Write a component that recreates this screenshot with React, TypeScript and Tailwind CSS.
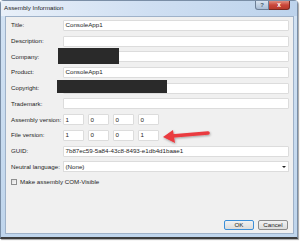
import React from "react";

const font = { fontFamily: '"Liberation Sans", Arial, sans-serif' };

function Field({ label, children }: { label: string; children?: React.ReactNode }) {
  return (
    <div className="flex items-center h-[11px]">
      <div className="w-[52px] shrink-0 text-[6.2px] text-[#1e1e1e] leading-none whitespace-nowrap">{label}</div>
      {children}
    </div>
  );
}

function TextBox({ value, className = "" }: { value?: string; className?: string }) {
  return (
    <div className={`h-[11px] bg-white border border-[#dcdcdc] rounded-[1px] flex items-center px-[1.5px] text-[6.2px] text-[#1e1e1e] leading-none whitespace-nowrap overflow-hidden ${className}`}>
      {value}
    </div>
  );
}

function Versions({ vals }: { vals: string[] }) {
  return (
    <div className="flex gap-[4px]">
      {vals.map((v, i) => (
        <TextBox key={i} value={v} className="w-[21px]" />
      ))}
    </div>
  );
}

export default function App() {
  return (
    <div className="w-[300px] h-[241px] bg-white relative overflow-hidden" style={font}>
      <div className="w-[298px] h-[239px] rounded-t-[4px] border border-[#7a8ea6] border-b-[#3c3c3c] border-b-2 bg-gradient-to-b from-[#d3e3f4] to-[#bfd5ec] flex flex-col shadow-[1px_1px_1px_rgba(0,0,0,0.35)]">
        {/* title bar */}
        <div className="h-[15px] shrink-0 flex items-start bg-gradient-to-r from-[#e9f0f9] via-[#cfdff2] to-[#bdd3ec]">
          <div className="pl-[3px] pt-[4px] text-[6.2px] text-[#222] leading-none whitespace-nowrap">Assembly Information</div>
          <div className="flex-1" />
          <div className="flex mr-[7px]">
            <div className="w-[14px] h-[9px] border border-[#6d7f96] border-t-0 rounded-bl-[3px] bg-gradient-to-b from-[#d8e4f1] to-[#a9bdd5] flex items-center justify-center text-[6px] text-[#4a5a6e] leading-none font-bold">?</div>
            <div className="w-[21px] h-[9px] border border-[#7a2a22] border-t-0 border-l-0 rounded-br-[3px] bg-gradient-to-b from-[#e08d80] via-[#c9463a] to-[#b83a2b] flex items-center justify-center text-[6.5px] text-white leading-none font-bold">x</div>
          </div>
        </div>
        {/* client area */}
        <div className="relative ml-[4px] mr-[3px] mb-[3px] flex-1 bg-[#f0f0f0] border border-[#9fb2c9] flex flex-col pl-[5px] pr-[4px] pt-[3px] pb-[3px]">
          <div className="flex flex-col gap-[4.7px]">
            <Field label="Title:"><TextBox value="ConsoleApp1" className="flex-1" /></Field>
            <Field label="Description:"><TextBox className="flex-1" /></Field>
            <Field label="Company:"><TextBox className="flex-1" /></Field>
            <Field label="Product:"><TextBox value="ConsoleApp1" className="flex-1" /></Field>
            <Field label="Copyright:"><TextBox className="flex-1" /></Field>
            <Field label="Trademark:"><TextBox className="flex-1" /></Field>
            <Field label="Assembly version:"><Versions vals={["1", "0", "0", "0"]} /></Field>
            <Field label="File version:"><Versions vals={["1", "0", "0", "1"]} /></Field>
            <Field label="GUID:"><TextBox value="7b87ec59-5a84-43c8-8493-e1db4d1baae1" className="flex-1 text-[5.8px]" /></Field>
            <Field label="Neutral language:">
              <div className="flex-1 h-[11px] bg-white border border-[#dcdcdc] flex items-center pl-[1.5px] pr-[2px] text-[6.2px] text-[#1e1e1e] leading-none">
                <span className="flex-1">(None)</span>
                <span className="w-0 h-0 border-l-[2px] border-r-[2px] border-t-[2px] border-l-transparent border-r-transparent border-t-[#222]" />
              </div>
            </Field>
            <div className="flex items-center h-[11px] gap-[3px]">
              <div className="w-[6px] h-[6px] border border-[#8e8f8f] bg-gradient-to-br from-[#dcdcdc] to-[#fafafa]" />
              <span className="text-[6.2px] text-[#1e1e1e] leading-none">Make assembly COM-Visible</span>
            </div>
          </div>
          <div className="flex-1" />
          <div className="flex justify-end gap-[4px] pr-[1px]">
            <div className="w-[30px] h-[10px] rounded-[2px] border border-[#3c8fd8] bg-gradient-to-b from-[#f2f2f2] to-[#dcdcdc] flex items-center justify-center text-[6.2px] text-[#1e1e1e] leading-none">OK</div>
            <div className="w-[30px] h-[10px] rounded-[2px] border border-[#8a8a8a] bg-gradient-to-b from-[#f2f2f2] to-[#dcdcdc] flex items-center justify-center text-[6.2px] text-[#1e1e1e] leading-none">Cancel</div>
          </div>
          {/* redactions */}
          <div className="absolute left-[52px] top-[31px] w-[61px] h-[16px] bg-[#2a2a2a]" />
          <div className="absolute left-[51px] top-[63px] w-[110px] h-[13px] bg-[#2a2a2a]" />
        </div>
      </div>
      {/* red arrow */}
      <svg className="absolute left-[158px] top-[124px]" width="56" height="24" viewBox="0 0 56 24">
        <defs>
          <filter id="sh" x="-20%" y="-40%" width="140%" height="180%">
            <feDropShadow dx="0.6" dy="1" stdDeviation="0.8" floodColor="#000" floodOpacity="0.35" />
          </filter>
        </defs>
        <g filter="url(#sh)">
          <line x1="14" y1="12" x2="50" y2="9" stroke="#ea3b3f" strokeWidth="3.6" strokeLinecap="round" />
          <polygon points="5,13 15,6 17,19" fill="#ea3b3f" />
        </g>
      </svg>
    </div>
  );
}
